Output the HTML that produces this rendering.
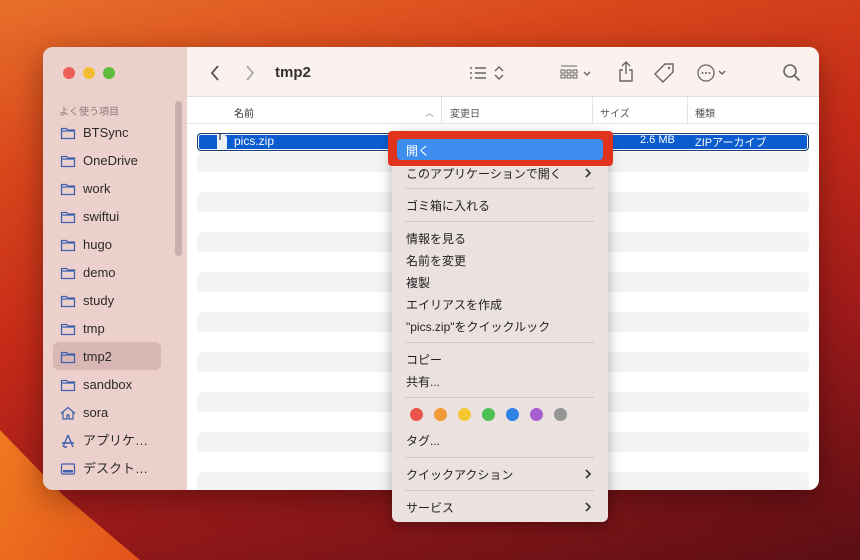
<!DOCTYPE html>
<html><head><meta charset="utf-8"><style>
*{margin:0;padding:0;box-sizing:border-box}
body{width:860px;height:560px;overflow:hidden;position:relative;font-family:"Liberation Sans","Noto Sans CJK JP",sans-serif;
background:linear-gradient(165deg,#e8702a 0%,#d8461c 22%,#c42a18 45%,#9e1a1a 68%,#5a0e14 100%);}
.bl{position:absolute;left:0;top:430px;width:140px;height:130px;background:linear-gradient(120deg,#f07a20,#e2521a);clip-path:polygon(0 0,45% 50%,100% 100%,0 100%)}
.win{position:absolute;left:43px;top:47px;width:776px;height:443px;border-radius:10px;overflow:hidden;background:#fff;box-shadow:0 8px 30px rgba(0,0,0,.35)}
.side{position:absolute;left:0;top:0;width:144px;height:443px;background:#ecd0cb}
.tool{position:absolute;left:144px;top:0;right:0;height:50px;background:#fbf1ee;border-bottom:1px solid #e4dada}
.dot{position:absolute;top:20px;width:12px;height:12px;border-radius:50%}
.si{position:absolute;left:17px;font-size:13px;color:#2a2a2a;height:20px;line-height:20px}
.si svg{position:absolute;left:0;top:3px}
.si span{position:absolute;left:23px;white-space:nowrap}
.hdr{position:absolute;left:144px;top:50px;right:0;height:27px;border-bottom:1px solid #e6e6e6;font-size:10px;color:#555}
.hdr div{position:absolute;top:8px}
.stripe{position:absolute;left:154px;width:612px;height:20px;background:#f4f4f4;border-radius:5px}
.menu{position:absolute;left:392px;top:131px;width:216px;height:391px;background:#ebe2e0;border-radius:6px;box-shadow:0 4px 14px rgba(0,0,0,.3);font-size:12px;color:#222}
.mi{position:absolute;left:14px;white-space:nowrap}
.sep{position:absolute;left:13px;width:189px;height:1px;background:#cfc6c4}
.arr{position:absolute;right:16px;width:8px;height:10px}
.c{position:absolute;top:277px;width:13px;height:13px;border-radius:50%}
</style></head><body>
<div class="bl"></div>
<div class="win">
 <div class="side">
  <div class="dot" style="left:20px;background:#ec5f57"></div>
  <div class="dot" style="left:40px;background:#f4bc30"></div>
  <div class="dot" style="left:60px;background:#5dbb3f"></div>
  <div style="position:absolute;left:16px;top:56px;font-size:10px;color:#8a7a78">よく使う項目</div>
  <div style="position:absolute;left:132px;top:54px;width:7px;height:155px;background:#c9b0ad;border-radius:4px"></div>
  <div style="position:absolute;left:10px;top:295px;width:108px;height:28px;background:#d9b7b4;border-radius:6px"></div>
  <div class="si" style="top:76px"><svg width="16" height="14"><path d="M1.5 2.5h5l1.5 1.5h6.5v8.5h-13z M1.5 5h13" fill="none" stroke="#3d5fb0" stroke-width="1.2"/></svg><span>BTSync</span></div>
  <div class="si" style="top:104px"><svg width="16" height="14"><path d="M1.5 2.5h5l1.5 1.5h6.5v8.5h-13z M1.5 5h13" fill="none" stroke="#3d5fb0" stroke-width="1.2"/></svg><span>OneDrive</span></div>
  <div class="si" style="top:132px"><svg width="16" height="14"><path d="M1.5 2.5h5l1.5 1.5h6.5v8.5h-13z M1.5 5h13" fill="none" stroke="#3d5fb0" stroke-width="1.2"/></svg><span>work</span></div>
  <div class="si" style="top:160px"><svg width="16" height="14"><path d="M1.5 2.5h5l1.5 1.5h6.5v8.5h-13z M1.5 5h13" fill="none" stroke="#3d5fb0" stroke-width="1.2"/></svg><span>swiftui</span></div>
  <div class="si" style="top:188px"><svg width="16" height="14"><path d="M1.5 2.5h5l1.5 1.5h6.5v8.5h-13z M1.5 5h13" fill="none" stroke="#3d5fb0" stroke-width="1.2"/></svg><span>hugo</span></div>
  <div class="si" style="top:216px"><svg width="16" height="14"><path d="M1.5 2.5h5l1.5 1.5h6.5v8.5h-13z M1.5 5h13" fill="none" stroke="#3d5fb0" stroke-width="1.2"/></svg><span>demo</span></div>
  <div class="si" style="top:244px"><svg width="16" height="14"><path d="M1.5 2.5h5l1.5 1.5h6.5v8.5h-13z M1.5 5h13" fill="none" stroke="#3d5fb0" stroke-width="1.2"/></svg><span>study</span></div>
  <div class="si" style="top:272px"><svg width="16" height="14"><path d="M1.5 2.5h5l1.5 1.5h6.5v8.5h-13z M1.5 5h13" fill="none" stroke="#3d5fb0" stroke-width="1.2"/></svg><span>tmp</span></div>
  <div class="si" style="top:300px"><svg width="16" height="14"><path d="M1.5 2.5h5l1.5 1.5h6.5v8.5h-13z M1.5 5h13" fill="none" stroke="#3d5fb0" stroke-width="1.2"/></svg><span>tmp2</span></div>
  <div class="si" style="top:328px"><svg width="16" height="14"><path d="M1.5 2.5h5l1.5 1.5h6.5v8.5h-13z M1.5 5h13" fill="none" stroke="#3d5fb0" stroke-width="1.2"/></svg><span>sandbox</span></div>
  <div class="si" style="top:356px"><svg width="16" height="14"><path d="M1 7.5L8 1.5l7 6 M3 6v7h4v-4h2v4h4V6" fill="none" stroke="#3d5fb0" stroke-width="1.2"/></svg><span>sora</span></div>
  <div class="si" style="top:384px"><svg width="16" height="14"><path d="M8 1L3 13 M8 1l5 12 M2 9h12 M4 13h3" fill="none" stroke="#3d5fb0" stroke-width="1.4"/></svg><span>アプリケ…</span></div>
  <div class="si" style="top:412px"><svg width="16" height="14"><rect x="1.5" y="2" width="13" height="10" rx="1" fill="none" stroke="#3d5fb0" stroke-width="1.2"/><rect x="3" y="8" width="10" height="2.5" fill="#3d5fb0"/></svg><span>デスクト…</span></div>
 </div>
 <div class="tool">
  <svg style="position:absolute;left:22px;top:17px" width="12" height="18"><path d="M9 2L3 9l6 7" fill="none" stroke="#555" stroke-width="1.8"/></svg>
  <svg style="position:absolute;left:57px;top:17px" width="12" height="18"><path d="M3 2l6 7-6 7" fill="none" stroke="#aaa" stroke-width="1.8"/></svg>
  <div style="position:absolute;left:88px;top:17px;font-size:15px;font-weight:bold;color:#333">tmp2</div>
  <svg style="position:absolute;left:282px;top:18px" width="40" height="16"><path d="M1 3h2M1 8h2M1 13h2M6 3h11M6 8h11M6 13h11M26 6l4-4 4 4M26 10l4 4 4-4" fill="none" stroke="#666" stroke-width="1.4"/></svg>
  <svg style="position:absolute;left:372px;top:17px" width="40" height="18"><path d="M2 2h16M2 6h4v3H2zM8 6h4v3H8zM14 6h4v3h-4zM2 11h4v3H2zM8 11h4v3H8zM14 11h4v3h-4z" fill="none" stroke="#666" stroke-width="1"/><path d="M25 8l3 3 3-3" fill="none" stroke="#666" stroke-width="1.4"/></svg>
  <svg style="position:absolute;left:430px;top:13px" width="18" height="24"><path d="M9 2v12M5 6l4-4 4 4M6 10H3v11h12V10h-3" fill="none" stroke="#666" stroke-width="1.4"/></svg>
  <svg style="position:absolute;left:466px;top:15px" width="24" height="22"><path d="M12 2h8v8l-10 10-8-8z" fill="none" stroke="#666" stroke-width="1.4"/><circle cx="16" cy="6" r="1.2" fill="#666"/></svg>
  <svg style="position:absolute;left:510px;top:16px" width="40" height="20"><circle cx="9" cy="10" r="8" fill="none" stroke="#666" stroke-width="1.3"/><circle cx="5.5" cy="10" r="1" fill="#666"/><circle cx="9" cy="10" r="1" fill="#666"/><circle cx="12.5" cy="10" r="1" fill="#666"/><path d="M22 8l3 3 3-3" fill="none" stroke="#666" stroke-width="1.4"/></svg>
  <svg style="position:absolute;left:595px;top:16px" width="20" height="20"><circle cx="8" cy="8" r="6" fill="none" stroke="#666" stroke-width="1.6"/><path d="M12.5 12.5l5 5" stroke="#666" stroke-width="1.8"/></svg>
 </div>
 <div class="hdr">
  <div style="left:47px;color:#333">名前</div>
  <div style="left:238px;top:9px;font-size:9px;color:#888">︿</div>
  <div style="left:254px;top:0;height:27px;width:1px;background:#e3e3e3"></div>
  <div style="left:263px">変更日</div>
  <div style="left:405px;top:0;height:27px;width:1px;background:#e3e3e3"></div>
  <div style="left:413px">サイズ</div>
  <div style="left:500px;top:0;height:27px;width:1px;background:#e3e3e3"></div>
  <div style="left:508px">種類</div>
 </div>
 <div class="stripe" style="top:105px"></div>
 <div class="stripe" style="top:145px"></div>
 <div class="stripe" style="top:185px"></div>
 <div class="stripe" style="top:225px"></div>
 <div class="stripe" style="top:265px"></div>
 <div class="stripe" style="top:305px"></div>
 <div class="stripe" style="top:345px"></div>
 <div class="stripe" style="top:385px"></div>
 <div class="stripe" style="top:425px"></div>
 <div style="position:absolute;left:154px;top:86px;width:612px;height:18px;background:#0b5ccf;border:1px solid #1c3d70;border-radius:4px;box-shadow:inset 0 0 0 1px #fff"></div>
 <svg style="position:absolute;left:174px;top:87px" width="10" height="15"><path d="M0 0h7l3 3v12H0z" fill="#eef2f8"/><path d="M3 0v6" stroke="#555" stroke-width="1.5"/></svg>
 <div style="position:absolute;left:191px;top:87px;font-size:12px;color:#fff">pics.zip</div>
 <div style="position:absolute;left:597px;top:87px;font-size:11px;color:#fff">2.6 MB</div>
 <div style="position:absolute;left:652px;top:87px;font-size:11px;color:#fff">ZIPアーカイブ</div>
</div>
<div class="menu">
 <div style="position:absolute;left:-4px;top:0;width:225px;height:35px;background:#e0321c;border-radius:4px"></div>
 <div style="position:absolute;left:5px;top:8px;width:206px;height:21px;background:#3e8ef0;border-radius:4px"></div>
 <div class="mi" style="top:11px;color:#fff">開く</div>
 <div class="mi" style="top:34px">このアプリケーションで開く</div><svg class="arr" style="top:37px"><path d="M2 1l4 4-4 4" fill="none" stroke="#333" stroke-width="1.6"/></svg>
 <div class="sep" style="top:57px"></div>
 <div class="mi" style="top:66px">ゴミ箱に入れる</div>
 <div class="sep" style="top:90px"></div>
 <div class="mi" style="top:99px">情報を見る</div>
 <div class="mi" style="top:121px">名前を変更</div>
 <div class="mi" style="top:143px">複製</div>
 <div class="mi" style="top:165px">エイリアスを作成</div>
 <div class="mi" style="top:187px">"pics.zip"をクイックルック</div>
 <div class="sep" style="top:211px"></div>
 <div class="mi" style="top:220px">コピー</div>
 <div class="mi" style="top:242px">共有...</div>
 <div class="sep" style="top:266px"></div>
 <div class="c" style="left:18px;background:#e8534a"></div>
 <div class="c" style="left:42px;background:#f09a35"></div>
 <div class="c" style="left:66px;background:#f4c832"></div>
 <div class="c" style="left:90px;background:#4cbf55"></div>
 <div class="c" style="left:114px;background:#2f82e6"></div>
 <div class="c" style="left:138px;background:#a75ed0"></div>
 <div class="c" style="left:162px;background:#959597"></div>
 <div class="mi" style="top:301px">タグ...</div>
 <div class="sep" style="top:326px"></div>
 <div class="mi" style="top:335px">クイックアクション</div><svg class="arr" style="top:338px"><path d="M2 1l4 4-4 4" fill="none" stroke="#333" stroke-width="1.6"/></svg>
 <div class="sep" style="top:359px"></div>
 <div class="mi" style="top:368px">サービス</div><svg class="arr" style="top:371px"><path d="M2 1l4 4-4 4" fill="none" stroke="#333" stroke-width="1.6"/></svg>
</div>
</body></html>
